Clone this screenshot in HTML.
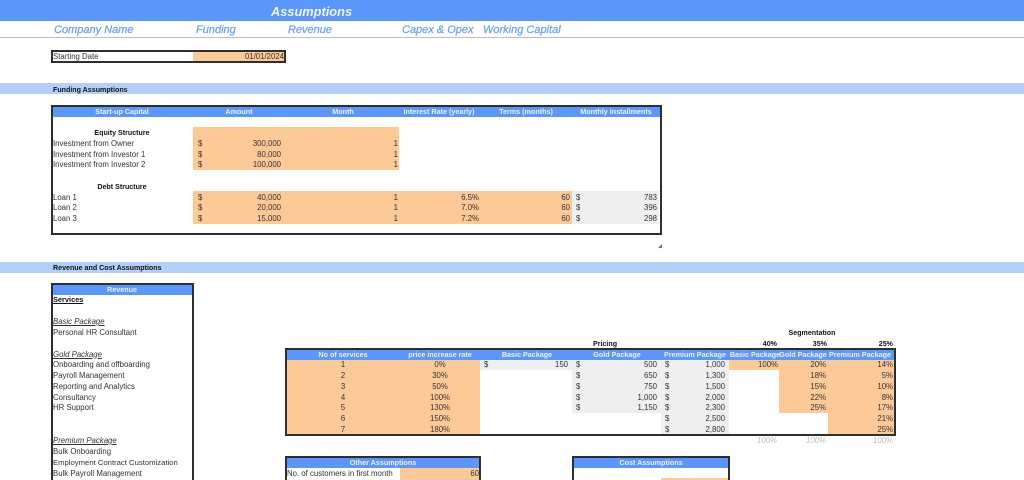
<!DOCTYPE html>
<html>
<head>
<meta charset="utf-8">
<style>
html,body{margin:0;padding:0;background:#fff;}
#p{position:relative;width:1024px;height:480px;overflow:hidden;background:#fff;font-family:"Liberation Sans",sans-serif;font-size:7.8px;color:#333;}
.b{position:absolute;}
.k{position:absolute;border:2px solid #2e2e2e;box-sizing:border-box;}
.t,.r,.c{position:absolute;white-space:nowrap;line-height:10px;filter:blur(.3px);}
.t{transform:translateY(-50%);}
.r{transform:translate(-100%,-50%);}
.c{transform:translate(-50%,-50%);}
.h{color:#eaf2ff;font-weight:bold;font-size:7.2px;}
.s{color:#111;font-weight:bold;font-size:7.1px;}
.n{color:#6ba1f8;font-style:italic;font-size:11px;line-height:14px;-webkit-text-stroke:.25px #6ba1f8;}
.u{font-style:italic;text-decoration:underline;}
.g{color:#bbb;font-style:italic;}
</style>
</head>
<body>
<div id="p">
<div class="b" style="left:0;top:0;width:1024px;height:20.5px;background:#5b96fb"></div>
<div class="b" style="left:0;top:37px;width:1024px;height:1px;background:#bdbdbd"></div>
<div class="b" style="left:0;top:83px;width:1024px;height:11px;background:#b3cffb"></div>
<div class="b" style="left:661px;top:94px;width:68px;height:1px;background:#fff"></div>
<div class="b" style="left:0;top:262px;width:1024px;height:11px;background:#b3cffb"></div>

<div class="t" style="left:271px;top:12px;color:#f0f5ff;font-style:italic;font-weight:bold;font-size:12.8px;line-height:16px">Assumptions</div>
<div class="t n" style="left:54px;top:30px">Company Name</div>
<div class="t n" style="left:196px;top:30px">Funding</div>
<div class="t n" style="left:288px;top:30px">Revenue</div>
<div class="t n" style="left:402px;top:30px">Capex &amp; Opex</div>
<div class="t n" style="left:483px;top:30px">Working Capital</div>

<!-- Starting date -->
<div class="b" style="left:193px;top:50px;width:93px;height:12px;background:#fdc996"></div>
<div class="k" style="left:51px;top:50px;width:235px;height:13px"></div>
<div class="t" style="left:53px;top:56.5px">Starting Date</div>
<div class="r" style="left:284px;top:56.5px">01/01/2024</div>

<div class="t s" style="left:53px;top:89.5px">Funding Assumptions</div>

<!-- Funding table -->
<div class="b" style="left:52px;top:106px;width:608px;height:10.5px;background:#5b96fb"></div>
<div class="b" style="left:193px;top:127px;width:206px;height:43px;background:#fdc996"></div>
<div class="b" style="left:193px;top:191px;width:379px;height:32.5px;background:#fdc996"></div>
<div class="b" style="left:572px;top:191px;width:87px;height:32.5px;background:#efefef"></div>
<div class="k" style="left:51px;top:105px;width:611px;height:130px"></div>
<div class="c h" style="left:122px;top:111.5px">Start-up Capital</div>
<div class="c h" style="left:239px;top:111.5px">Amount</div>
<div class="c h" style="left:343px;top:111.5px">Month</div>
<div class="c h" style="left:439px;top:111.5px">Interest Rate (yearly)</div>
<div class="c h" style="left:526px;top:111.5px">Terms (months)</div>
<div class="c h" style="left:616px;top:111.5px">Monthly Installments</div>

<div class="c s" style="left:122px;top:133px">Equity Structure</div>
<div class="t" style="left:53px;top:144px">Investment from Owner</div>
<div class="t" style="left:53px;top:154.5px">Investment from Investor 1</div>
<div class="t" style="left:53px;top:165px">Investment from Investor 2</div>
<div class="t" style="left:198px;top:144px">$</div><div class="r" style="left:281px;top:144px">300,000</div><div class="r" style="left:398px;top:144px">1</div>
<div class="t" style="left:198px;top:154.5px">$</div><div class="r" style="left:281px;top:154.5px">80,000</div><div class="r" style="left:398px;top:154.5px">1</div>
<div class="t" style="left:198px;top:165px">$</div><div class="r" style="left:281px;top:165px">100,000</div><div class="r" style="left:398px;top:165px">1</div>

<div class="c s" style="left:122px;top:186.5px">Debt Structure</div>
<div class="t" style="left:53px;top:197.5px">Loan 1</div>
<div class="t" style="left:53px;top:208px">Loan 2</div>
<div class="t" style="left:53px;top:219px">Loan 3</div>
<div class="t" style="left:198px;top:197.5px">$</div><div class="r" style="left:281px;top:197.5px">40,000</div><div class="r" style="left:398px;top:197.5px">1</div><div class="r" style="left:479px;top:197.5px">6.5%</div><div class="r" style="left:570px;top:197.5px">60</div><div class="t" style="left:576px;top:197.5px">$</div><div class="r" style="left:657px;top:197.5px">783</div>
<div class="t" style="left:198px;top:208px">$</div><div class="r" style="left:281px;top:208px">20,000</div><div class="r" style="left:398px;top:208px">1</div><div class="r" style="left:479px;top:208px">7.0%</div><div class="r" style="left:570px;top:208px">60</div><div class="t" style="left:576px;top:208px">$</div><div class="r" style="left:657px;top:208px">396</div>
<div class="t" style="left:198px;top:219px">$</div><div class="r" style="left:281px;top:219px">15,000</div><div class="r" style="left:398px;top:219px">1</div><div class="r" style="left:479px;top:219px">7.2%</div><div class="r" style="left:570px;top:219px">60</div><div class="t" style="left:576px;top:219px">$</div><div class="r" style="left:657px;top:219px">298</div>
<div class="b" style="left:658px;top:244px;width:4px;height:4px;background:#5b6fd8;clip-path:polygon(100% 0,100% 100%,0 100%)"></div>

<div class="t s" style="left:53px;top:267.5px">Revenue and Cost Assumptions</div>

<!-- Revenue box -->
<div class="b" style="left:52px;top:284px;width:140px;height:10.5px;background:#5b96fb"></div>
<div class="k" style="left:51px;top:283px;width:143px;height:210px"></div>
<div class="c h" style="left:122px;top:289.5px">Revenue</div>
<div class="t s" style="left:53px;top:300px;text-decoration:underline;font-size:7.4px">Services</div>
<div class="t u" style="left:53px;top:322px">Basic Package</div>
<div class="t" style="left:53px;top:332.5px">Personal HR Consultant</div>
<div class="t u" style="left:53px;top:354.5px">Gold Package</div>
<div class="t" style="left:53px;top:365px">Onboarding and offboarding</div>
<div class="t" style="left:53px;top:376px">Payroll Management</div>
<div class="t" style="left:53px;top:386.5px">Reporting and Analytics</div>
<div class="t" style="left:53px;top:397.5px">Consultancy</div>
<div class="t" style="left:53px;top:408px">HR Support</div>
<div class="t u" style="left:53px;top:441px">Premium Package</div>
<div class="t" style="left:53px;top:451.5px">Bulk Onboarding</div>
<div class="t" style="left:53px;top:463px;font-size:7.7px">Employment Contract Customization</div>
<div class="t" style="left:53px;top:473.5px">Bulk Payroll Management</div>

<!-- Pricing labels -->
<div class="c s" style="left:605px;top:343.5px">Pricing</div>
<div class="c s" style="left:812px;top:332.5px">Segmentation</div>
<div class="r s" style="left:777px;top:343.5px">40%</div>
<div class="r s" style="left:827px;top:343.5px">35%</div>
<div class="r s" style="left:893px;top:343.5px">25%</div>

<!-- Pricing table -->
<div class="b" style="left:286px;top:349px;width:608px;height:10.5px;background:#5b96fb"></div>
<div class="b" style="left:286px;top:359.5px;width:194px;height:75px;background:#fdc996"></div>
<div class="b" style="left:480px;top:359.5px;width:92px;height:10.5px;background:#efefef"></div>
<div class="b" style="left:572px;top:359.5px;width:89px;height:53.5px;background:#efefef"></div>
<div class="b" style="left:661px;top:359.5px;width:68px;height:75px;background:#efefef"></div>
<div class="b" style="left:729px;top:359.5px;width:50px;height:10.5px;background:#fdc996"></div>
<div class="b" style="left:779px;top:359.5px;width:49px;height:53.5px;background:#fdc996"></div>
<div class="b" style="left:828px;top:359.5px;width:66px;height:75px;background:#fdc996"></div>
<div class="k" style="left:285px;top:348px;width:611px;height:87.5px"></div>
<div class="c h" style="left:343px;top:354.5px">No of services</div>
<div class="c h" style="left:440px;top:354.5px">price increase rate</div>
<div class="c h" style="left:527px;top:354.5px">Basic Package</div>
<div class="c h" style="left:617px;top:354.5px">Gold Package</div>
<div class="c h" style="left:695px;top:354.5px">Premium Package</div>
<div class="c h" style="left:755px;top:354.5px">Basic Package</div>
<div class="c h" style="left:803px;top:354.5px">Gold Package</div>
<div class="c h" style="left:860px;top:354.5px">Premium Package</div>

<div class="c" style="left:343px;top:365px">1</div><div class="c" style="left:440px;top:365px">0%</div>
<div class="c" style="left:343px;top:376px">2</div><div class="c" style="left:440px;top:376px">30%</div>
<div class="c" style="left:343px;top:386.5px">3</div><div class="c" style="left:440px;top:386.5px">50%</div>
<div class="c" style="left:343px;top:397.5px">4</div><div class="c" style="left:440px;top:397.5px">100%</div>
<div class="c" style="left:343px;top:408px">5</div><div class="c" style="left:440px;top:408px">130%</div>
<div class="c" style="left:343px;top:419px">6</div><div class="c" style="left:440px;top:419px">150%</div>
<div class="c" style="left:343px;top:429.5px">7</div><div class="c" style="left:440px;top:429.5px">180%</div>

<div class="t" style="left:484px;top:365px">$</div><div class="r" style="left:568px;top:365px">150</div>

<div class="t" style="left:576px;top:365px">$</div><div class="r" style="left:657px;top:365px">500</div>
<div class="t" style="left:576px;top:376px">$</div><div class="r" style="left:657px;top:376px">650</div>
<div class="t" style="left:576px;top:386.5px">$</div><div class="r" style="left:657px;top:386.5px">750</div>
<div class="t" style="left:576px;top:397.5px">$</div><div class="r" style="left:657px;top:397.5px">1,000</div>
<div class="t" style="left:576px;top:408px">$</div><div class="r" style="left:657px;top:408px">1,150</div>

<div class="t" style="left:665px;top:365px">$</div><div class="r" style="left:725px;top:365px">1,000</div>
<div class="t" style="left:665px;top:376px">$</div><div class="r" style="left:725px;top:376px">1,300</div>
<div class="t" style="left:665px;top:386.5px">$</div><div class="r" style="left:725px;top:386.5px">1,500</div>
<div class="t" style="left:665px;top:397.5px">$</div><div class="r" style="left:725px;top:397.5px">2,000</div>
<div class="t" style="left:665px;top:408px">$</div><div class="r" style="left:725px;top:408px">2,300</div>
<div class="t" style="left:665px;top:419px">$</div><div class="r" style="left:725px;top:419px">2,500</div>
<div class="t" style="left:665px;top:429.5px">$</div><div class="r" style="left:725px;top:429.5px">2,800</div>

<div class="r" style="left:778px;top:365px">100%</div>
<div class="r" style="left:826px;top:365px">20%</div>
<div class="r" style="left:826px;top:376px">18%</div>
<div class="r" style="left:826px;top:386.5px">15%</div>
<div class="r" style="left:826px;top:397.5px">22%</div>
<div class="r" style="left:826px;top:408px">25%</div>
<div class="r" style="left:893px;top:365px">14%</div>
<div class="r" style="left:893px;top:376px">5%</div>
<div class="r" style="left:893px;top:386.5px">10%</div>
<div class="r" style="left:893px;top:397.5px">8%</div>
<div class="r" style="left:893px;top:408px">17%</div>
<div class="r" style="left:893px;top:419px">21%</div>
<div class="r" style="left:893px;top:429.5px">25%</div>

<div class="r g" style="left:777px;top:441px">100%</div>
<div class="r g" style="left:826px;top:441px">100%</div>
<div class="r g" style="left:893px;top:441px">100%</div>

<!-- Other Assumptions -->
<div class="b" style="left:286px;top:457px;width:193px;height:10.5px;background:#5b96fb"></div>
<div class="b" style="left:400px;top:468px;width:79px;height:12px;background:#fdc996"></div>
<div class="k" style="left:285px;top:456px;width:195.5px;height:40px"></div>
<div class="c h" style="left:383px;top:463px">Other Assumptions</div>
<div class="t" style="left:287px;top:473.5px">No. of customers in first month</div>
<div class="r" style="left:479px;top:473.5px">60</div>

<!-- Cost Assumptions -->
<div class="b" style="left:573px;top:457px;width:156px;height:10.5px;background:#5b96fb"></div>
<div class="b" style="left:661px;top:478px;width:68px;height:2px;background:#fdc996"></div>
<div class="k" style="left:572px;top:456px;width:158px;height:40px"></div>
<div class="c h" style="left:651px;top:463px">Cost Assumptions</div>
</div>
</body>
</html>
